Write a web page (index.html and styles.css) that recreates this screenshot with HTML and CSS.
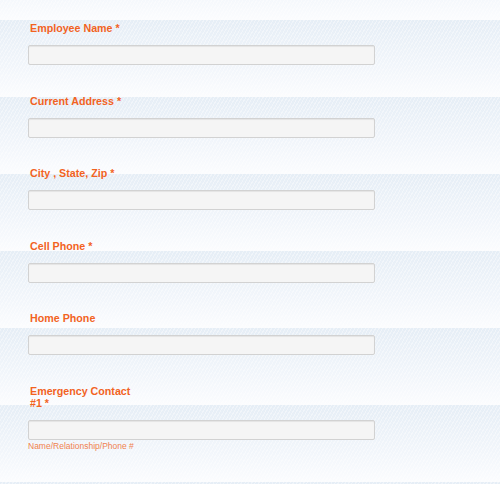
FILE: index.html
```html
<!DOCTYPE html>
<html lang="en">
<head>
    <meta charset="UTF-8">
    <meta name="viewport" content="width=device-width, initial-scale=1.0">
    <title>Employee Information</title>
    <link rel="stylesheet" href="styles.css">
</head>
<body>
    <ul class="form-list">
        <li class="form-line">
            <label class="form-label" for="empName">Employee Name <span class="required">*</span></label>
            <input class="form-input" type="text" id="empName">
        </li>
        <li class="form-line">
            <label class="form-label" for="address">Current Address <span class="required">*</span></label>
            <input class="form-input" type="text" id="address">
        </li>
        <li class="form-line">
            <label class="form-label" for="city">City , State, Zip <span class="required">*</span></label>
            <input class="form-input" type="text" id="city">
        </li>
        <li class="form-line">
            <label class="form-label" for="cell">Cell Phone <span class="required">*</span></label>
            <input class="form-input" type="text" id="cell">
        </li>
        <li class="form-line">
            <label class="form-label" for="home">Home Phone</label>
            <input class="form-input" type="text" id="home">
        </li>
        <li class="form-line">
            <label class="form-label" for="emergency">Emergency Contact <span class="nowrap">#1 <span class="required">*</span></span></label>
            <input class="form-input" type="text" id="emergency">
            <span class="form-sublabel">Name/Relationship/Phone #</span>
        </li>
    </ul>
</body>
</html>
```

FILE: styles.css
```css
html {
    min-height: 100%;
    background-color: #fbfcfe;
    background-image:
        repeating-linear-gradient(120deg, rgba(255, 255, 255, 0.4) 0px, rgba(255, 255, 255, 0.4) 1px, transparent 1px, transparent 3px),
        linear-gradient(#e6eef6, #f2f6fb 60%, #fbfcfe);
    background-size: auto, 100% 77px;
    background-position: 0 0, 0 20px;
    background-repeat: repeat, repeat;
}

body {
    margin: 0;
    font-family: "Liberation Sans", Arial, sans-serif;
}

.form-list {
    list-style: none;
    margin: 0;
    padding: 22px 0 0 28px;
}

.form-line {
    padding-bottom: 29.5px;
}

.form-label {
    display: block;
    width: 112px;
    padding-left: 2px;
    margin-bottom: 11px;
    font-size: 10.7px;
    line-height: 12px;
    font-weight: bold;
    color: #f2631f;
}

.nowrap {
    white-space: nowrap;
}

.form-input {
    display: block;
    box-sizing: border-box;
    width: 347px;
    height: 20px;
    margin: 0;
    padding: 2px 4px;
    background-color: #f5f5f5;
    border: 1px solid #d2d2d2;
    border-radius: 2px;
    box-shadow: inset 0 1px 1px #e4e4e4;
}

.form-sublabel {
    display: block;
    margin-top: 1px;
    font-size: 8.5px;
    color: #f0824f;
}
```
